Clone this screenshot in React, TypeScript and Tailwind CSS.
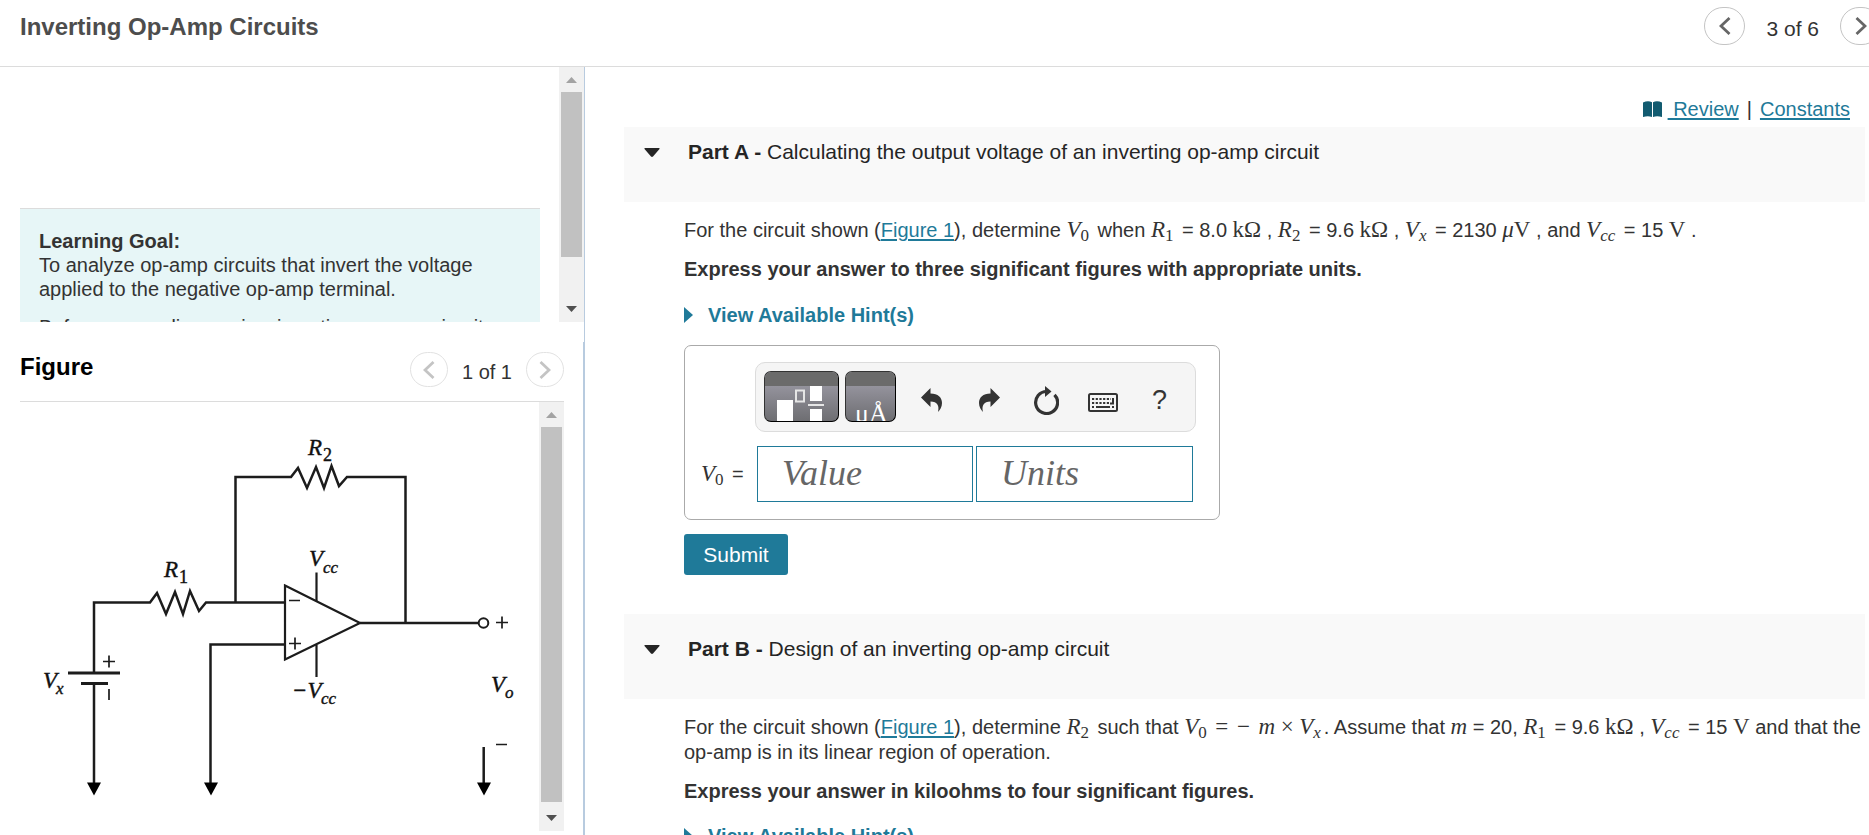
import React from "react";

const sans = "font-['Liberation_Sans',Arial,sans-serif]";
const serif = "font-['Liberation_Serif','Times_New_Roman',serif]";

function Sym({ children, sub, italicSub }: { children: React.ReactNode; sub?: string; italicSub?: boolean }) {
  return (
    <span className={`${serif} whitespace-nowrap text-[23px] leading-none ${sub ? "mr-[3px]" : ""}`}>
      <i>{children}</i>
      {sub && <sub className={italicSub ? "bottom-[-4px] text-[17px] italic" : "bottom-[-4px] text-[17px]"}>{sub}</sub>}
    </span>
  );
}

function Unit({ children }: { children: React.ReactNode }) {
  return <span className={`${serif} text-[23px] leading-none`}>{children}</span>;
}

function ScrollBar({ thumb }: { thumb: string }) {
  return (
    <div aria-hidden="true" className="flex w-[25px] shrink-0 flex-col items-center bg-[#f1f1f1]">
      <svg width="25" height="25" viewBox="0 0 25 25" className="shrink-0">
        <path d="M12.500 10L18 16H7Z" fill="#a3a3a3" />
      </svg>
      <div className={`w-[21px] bg-[#c1c1c1] ${thumb}`} />
      <div className="flex-1" />
      <svg width="25" height="25" viewBox="0 0 25 25" className="shrink-0">
        <path d="M12.500 15L18 9H7Z" fill="#505050" />
      </svg>
    </div>
  );
}

function RoundButton({ label, dir, size, tone }: { label: string; dir: "left" | "right"; size: string; tone: string }) {
  return (
    <button aria-label={label} className={`flex shrink-0 items-center justify-center rounded-full border bg-white ${size} ${tone}`}>
      <svg width="12" height="20" viewBox="0 0 12 20" fill="none" stroke="currentColor" strokeWidth="2.800">
        <path d={dir === "left" ? "M10.500 2L2 10L10.500 18" : "M1.500 2L10 10L1.500 18"} />
      </svg>
    </button>
  );
}

function Circuit() {
  return (
    <svg role="img" aria-label="Inverting op-amp circuit" width="519" height="429" viewBox="20 402 519 429" className="shrink-0">
      <g fill="none" stroke="#1c1c1c" strokeWidth="2.500">
        <path d="M94 673V602.500H150L157 593L166 614L175 592L183 614L190 591L199 611L206 602.500H285" />
        <path d="M235.500 602.500V477H291L298 468L307 488L316 467L324 488L331.500 466L339 486L347 477H405.500V623" />
        <path d="M285 585.500L360 623L285 659.500Z" strokeWidth="2.200" />
        <path d="M360 623H479" />
        <circle cx="483.500" cy="623" r="4.800" strokeWidth="2" />
        <path d="M316.500 572.500V601M316.500 645V677" strokeWidth="2.200" />
        <path d="M285 644.500H210.500V784M94 683.500V784M483.700 747V784" />
        <path d="M68 673H120M81 683.500H108" strokeWidth="3" />
        <path d="M103 661.500H115M109 655.500V667.500M109 689V700M289 600.500H300M289 643.500H301M295 637.500V649.500M496 622.500H508M502 616.500V628.500M496 744.500H507" strokeWidth="1.700" />
      </g>
      <g fill="#000">
        <path d="M87 782.500H101L94 795.500ZM204 782.500H218L211 795.500ZM477 782.500H491L484 795.500Z" />
      </g>
      <g fill="#111" stroke="#111" strokeWidth="0.400" className={`${serif} text-[23px] italic`}>
        <text x="308" y="455">R</text>
        <text x="323" y="461" className="text-[18px] not-italic">2</text>
        <text x="164" y="577">R</text>
        <text x="179" y="583" className="text-[18px] not-italic">1</text>
        <text x="309" y="566">V</text>
        <text x="323" y="573" className="text-[17px]">cc</text>
        <text x="292" y="698">−V</text>
        <text x="321" y="704" className="text-[17px]">cc</text>
        <text x="43" y="688">V</text>
        <text x="56" y="694" className="text-[17px]">x</text>
        <text x="491" y="692">V</text>
        <text x="505" y="698" className="text-[17px]">o</text>
      </g>
    </svg>
  );
}

function PartHeader({ part, title, size }: { part: string; title: string; size: string }) {
  return (
    <h2 className={`flex bg-[#f9f9f9] pl-5 text-[21px] leading-6 text-[#252525] ${size}`}>
      <button aria-label={`Collapse ${part}`} className="mr-7 h-6 w-4">
        <svg width="16" height="9" viewBox="0 0 16 9" fill="#252525">
          <path d="M1 0H15Q16 0 15.500 1L9 8.500Q8 9.300 7 8.500L0.500 1Q0 0 1 0Z" />
        </svg>
      </button>
      <span>
        <b>{part} -</b> {title}
      </span>
    </h2>
  );
}

function Hints() {
  return (
    <button className="flex items-center gap-[15px] font-bold leading-6 text-[#1f7a99]">
      <svg width="9" height="16" viewBox="0 0 9 16" fill="currentColor">
        <path d="M0 0L9 8L0 16Z" />
      </svg>
      View Available Hint(s)
    </button>
  );
}

function ToolButton({ label, children }: { label: string; children: React.ReactNode }) {
  return (
    <button aria-label={label} className="flex h-[51px] w-[57px] items-center justify-center pt-2 text-[#333]">
      {children}
    </button>
  );
}

const dark = "h-[51px] overflow-hidden rounded-[7px] border border-[#333] border-r-black border-b-black bg-linear-to-b from-[#a4a2ae] to-[#6e6e72]";

function Toolbar() {
  return (
    <div className="flex h-[70px] w-[441px] items-start rounded-[10px] border border-[#dcdcdc] bg-[#f5f5f5] pt-2 pl-2">
      <button aria-label="Templates" className={`${dark} mr-1.5 w-[75px]`}>
        <svg width="73" height="49" viewBox="0 0 73 49">
          <path d="M0 0H73V14H0Z" fill="#6b6b6b" />
          <path d="M12 28H28V49H12ZM45 14H57V29H45ZM45 37H57V49H45Z" fill="#fff" />
          <path d="M43 33H59" stroke="#e6e6e6" strokeWidth="2" />
          <path d="M31 18.500H39V29.500H31Z" fill="none" stroke="#e6e6e6" strokeWidth="2" />
        </svg>
      </button>
      <button aria-label="Symbols" className={`${dark} mr-[7px] w-[51px]`}>
        <svg width="49" height="49" viewBox="0 0 49 49">
          <path d="M0 0H49V14H0Z" fill="#6b6b6b" />
          <text x="9" y="50" fill="#fff" className={`${serif} text-[26px]`}>μÅ</text>
        </svg>
      </button>
      <ToolButton label="Undo">
        <svg width="22" height="25" viewBox="0 0 22 25" fill="currentColor">
          <path d="M0 9.500L9.500 0V5.500C17 5.500 21 9.500 21 15C21 19 19 22 17 24C18.500 18 16.500 13.500 9.500 13.500V19Z" />
        </svg>
      </ToolButton>
      <ToolButton label="Redo">
        <svg width="22" height="25" viewBox="0 0 22 25" fill="currentColor">
          <path d="M22 9.500L12.500 0V5.500C5 5.500 1 9.500 1 15C1 19 3 22 5 24C3.500 18 5.500 13.500 12.500 13.500V19Z" />
        </svg>
      </ToolButton>
      <ToolButton label="Reset">
        <svg width="26" height="29" viewBox="0 0 26 29">
          <path d="M14 5.500A11 11 0 1 0 21.500 8.800" fill="none" stroke="currentColor" strokeWidth="3.200" />
          <path d="M12 0L18.500 5.500L12 11Z" fill="currentColor" />
        </svg>
      </ToolButton>
      <ToolButton label="Keyboard shortcuts">
        <svg width="30" height="25" viewBox="0 0 30 25" fill="none" stroke="currentColor">
          <rect x="1" y="6" width="28" height="17" rx="1.500" strokeWidth="2" />
          <path d="M4 11H23M4 15H22" strokeWidth="2.200" strokeDasharray="2.200 1.500" />
          <path d="M4 19H6M8 19H22M24 19H26" strokeWidth="2" />
          <path d="M25 10V15.500H22" strokeWidth="2" />
        </svg>
      </ToolButton>
      <ToolButton label="Help">
        <span className="text-[27px] leading-none">?</span>
      </ToolButton>
    </div>
  );
}

const field = `${serif} h-[56px] border border-[#1f7a99] bg-white px-6 pb-0.5 text-[36px] italic text-[#333] placeholder:text-[#666] outline-none`;
const link = "text-[#1f7a99] underline underline-offset-2";

export default function App() {
  return (
    <div className={`${sans} flex h-screen flex-col overflow-hidden bg-white text-[20px] text-[#333]`}>
      <header className="flex h-[67px] shrink-0 items-start justify-between border-b border-[#dcdcdc] pl-5">
        <h1 className="pt-3 text-[24px] font-bold leading-[30px] text-[#4d4d4d]">Inverting Op-Amp Circuits</h1>
        <nav className="-mr-3 flex items-center pt-[7px] text-[21px]">
          <RoundButton label="Previous item" dir="left" size="h-[38px] w-[41px]" tone="border-[#c4c4c4] text-[#666]" />
          <span className="px-[21px] pt-1.5">3 of 6</span>
          <RoundButton label="Next item" dir="right" size="h-[38px] w-[41px]" tone="border-[#c4c4c4] text-[#666]" />
        </nav>
      </header>
      <div className="flex min-h-0 flex-1">
        <aside className="flex w-[585px] shrink-0 flex-col">
          <section className="flex h-[255px] shrink-0 overflow-hidden border-r border-[#b8cbdf]">
            <div className="min-w-0 flex-1 pt-[141px] pr-[19px] pl-5">
              <div className="border-t border-[#dcdcdc] bg-[#e7f6f7] px-[19px] pt-5 leading-6">
                <p className="font-bold">Learning Goal:</p>
                <p>To analyze op-amp circuits that invert the voltage applied to the negative op-amp terminal.</p>
                <p className="mt-[14px]">Before proceeding, review inverting op-amp circuits</p>
              </div>
            </div>
            <ScrollBar thumb="h-[165px]" />
          </section>
          <div className="h-5 shrink-0 border-r border-[#b8cbdf]" />
          <section className="flex flex-1 flex-col border-r-2 border-[#b8cbdf] pr-[19px] pl-5">
            <div className="flex h-[60px] shrink-0 items-start justify-between border-b border-[#dcdcdc]">
              <h2 className="pt-[10px] text-[24px] font-bold leading-[30px] text-black">Figure</h2>
              <div className="flex items-center pt-[10px]">
                <RoundButton label="Previous figure" dir="left" size="h-[35px] w-[38px]" tone="border-[#e2e2e2] text-[#c4c4c4]" />
                <span className="px-[14px] pt-1">1 of 1</span>
                <RoundButton label="Next figure" dir="right" size="h-[35px] w-[38px]" tone="border-[#e2e2e2] text-[#c4c4c4]" />
              </div>
            </div>
            <div className="flex h-[429px] shrink-0">
              <Circuit />
              <ScrollBar thumb="h-[375px]" />
            </div>
          </section>
        </aside>
        <main className="min-w-0 flex-1 pt-[30px] pr-1 pl-[39px]">
          <div className="flex h-[30px] items-start justify-end pr-[15px] leading-6">
            <svg width="19" height="17" viewBox="0 0 19 17" className="mt-1 mr-[6px]">
              <path d="M0 1.500Q5 -1 9 1.200V16Q5 14.500 0 16ZM10 1.200Q14 -1 19 1.500V16Q14 14.500 10 16Z" fill="#125b70" />
            </svg>
            <a href="#review" className={`${link} whitespace-pre`}> Review</a>
            <span className="px-2">|</span>
            <a href="#constants" className={link}>Constants</a>
          </div>
          <PartHeader part="Part A" title="Calculating the output voltage of an inverting op-amp circuit" size="h-[75px] pt-[13px]" />
          <div className="pl-[60px]">
            <p className="mt-4 leading-[25px]">
              For the circuit shown (<a href="#figure" className={link}>Figure 1</a>), determine <Sym sub="0">V</Sym> when <Sym sub="1">R</Sym> = 8.0 <Unit>kΩ</Unit> , <Sym sub="2">R</Sym> = 9.6 <Unit>kΩ</Unit> , <Sym sub="x" italicSub>V</Sym> = 2130 <Unit><i>μ</i>V</Unit> , and <Sym sub="cc" italicSub>V</Sym> = 15 <Unit>V</Unit> .
            </p>
            <p className="mt-[14px] font-bold leading-[25px]">Express your answer to three significant figures with appropriate units.</p>
            <div className="mt-[21px]">
              <Hints />
            </div>
            <div className="mt-[18px] flex h-[175px] w-[536px] flex-col rounded-[7px] border border-[#aaa] pt-4">
              <div className="pl-[70px]">
                <Toolbar />
              </div>
              <div className="mt-[14px] flex items-center pl-4">
                <label htmlFor="value" className="w-[56px]">
                  <Sym sub="0">V</Sym> =
                </label>
                <input id="value" placeholder="Value" className={`${field} mr-[3px] w-[216px]`} />
                <input aria-label="Units" placeholder="Units" className={`${field} w-[217px]`} />
              </div>
            </div>
            <button className="mt-[14px] block h-[41px] w-[104px] rounded-[3px] bg-[#1f7a99] text-[21px] text-white">Submit</button>
          </div>
          <div className="mt-[39px]">
            <PartHeader part="Part B" title="Design of an inverting op-amp circuit" size="h-[85px] pt-[23px]" />
          </div>
          <div className="pl-[60px]">
            <p className="mt-4 leading-[25px]">
              For the circuit shown (<a href="#figure" className={link}>Figure 1</a>), determine <Sym sub="2">R</Sym> such that <Sym sub="0">V</Sym> <Unit>=</Unit> <span className="px-[3px]"><Unit>−</Unit></span> <Sym>m</Sym> <Unit>×</Unit> <Sym sub="x" italicSub>V</Sym>. Assume that <Sym>m</Sym> = 20, <Sym sub="1">R</Sym> = 9.6 <Unit>kΩ</Unit> , <Sym sub="cc" italicSub>V</Sym> = 15 <Unit>V</Unit> and that the <span className="whitespace-nowrap">op-amp</span> is in its linear region of operation.
            </p>
            <p className="mt-[14px] font-bold leading-[25px]">Express your answer in kiloohms to four significant figures.</p>
            <div className="mt-5">
              <Hints />
            </div>
          </div>
        </main>
      </div>
    </div>
  );
}
